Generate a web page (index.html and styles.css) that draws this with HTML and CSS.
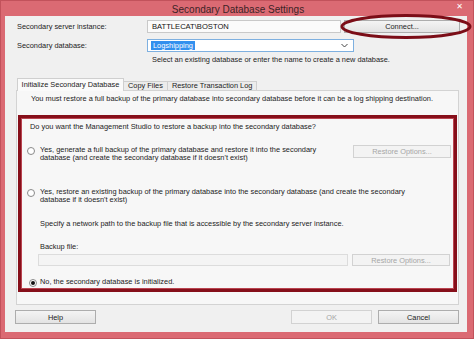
FILE: index.html
```html
<!DOCTYPE html>
<html lang="en">
<head>
  <meta charset="UTF-8" />
  <title>Secondary Database Settings</title>
  <link rel="stylesheet" href="styles.css">
</head>
<body>
  <div class="window">
    <div class="titlebar">
      <span class="title">Secondary Database Settings</span>
      <span class="close">&#x2715;</span>
    </div>

    <div class="client">
      <div class="form">
        <label class="label">Secondary server instance:</label>
        <div class="server-row">
          <div class="textbox readonly">BATTLECAT\BOSTON</div>
          <button class="btn connect">Connect...</button>
        </div>

        <label class="label">Secondary database:</label>
        <div class="combo">
          <span class="selected">Logshipping</span>
          <svg class="chevron" width="7" height="5" viewBox="0 0 7 5"><polyline points="0.5,1 3.5,4 6.5,1" fill="none" stroke="#444" stroke-width="1"/></svg>
        </div>

        <span></span>
        <div class="hint">Select an existing database or enter the name to create a new database.</div>
      </div>

      <div class="tabs">
        <div class="tab active">Initialize Secondary Database</div>
        <div class="tab">Copy Files</div>
        <div class="tab">Restore Transaction Log</div>
      </div>

      <div class="panel">
        <div class="intro">You must restore a full backup of the primary database into secondary database before it can be a log shipping destination.</div>

        <div class="group">
          <div class="question">Do you want the Management Studio to restore a backup into the secondary database?</div>

          <div class="option opt-1">
            <span class="radio"></span>
            <span class="option-text">Yes, generate a full backup of the primary database and restore it into the secondary<br>database (and create the secondary database if it doesn't exist)</span>
            <button class="btn disabled restore">Restore Options...</button>
          </div>

          <div class="option opt-2">
            <span class="radio"></span>
            <span class="option-text">Yes, restore an existing backup of the primary database into the secondary database (and create the secondary<br>database if it doesn't exist)</span>
          </div>

          <div class="indent specify">Specify a network path to the backup file that is accessible by the secondary server instance.</div>
          <div class="indent backup-label">Backup file:</div>
          <div class="backup-row">
            <div class="textbox disabled-box"></div>
            <button class="btn disabled restore">Restore Options...</button>
          </div>

          <div class="option opt-3">
            <span class="radio checked"></span>
            <span class="option-text">No, the secondary database is initialized.</span>
          </div>
        </div>
      </div>

      <div class="buttons">
        <button class="btn help">Help</button>
        <span class="spacer"></span>
        <button class="btn disabled">OK</button>
        <button class="btn">Cancel</button>
      </div>
    </div>

    <!-- annotation drawn over the screenshot -->
    <svg class="ellipse" width="134" height="26" viewBox="0 0 134 26">
      <ellipse cx="66" cy="12.5" rx="64" ry="11" fill="none" stroke="#7b0d17" stroke-width="3"/>
    </svg>
  </div>
</body>
</html>
```

FILE: styles.css
```css
* {
  margin: 0;
  padding: 0;
  box-sizing: border-box;
}

body {
  width: 474px;
  height: 339px;
  overflow: hidden;
  font-family: "Liberation Sans", Arial, sans-serif;
  font-size: 7.4px;
  color: #222;
}

.window {
  position: relative;
  width: 474px;
  height: 339px;
  background: #db6a73;
  border: 1px solid #c2525b;
  display: flex;
  flex-direction: column;
}

.titlebar {
  height: 15px;
  display: flex;
  align-items: center;
  justify-content: center;
  position: relative;
}

.title {
  font-size: 10px;
  color: #3b2326;
  margin-left: 2px;
  margin-top: 1px;
}

.close {
  position: absolute;
  right: 10px;
  top: 1px;
  color: #fff;
  font-size: 8px;
  font-family: "DejaVu Sans", sans-serif;
}

.client {
  flex: 1;
  margin: 0 6px 6px 4px;
  background: #f0f0f0;
  padding: 4px 8px 0 11px;
  display: flex;
  flex-direction: column;
}

/* top form */
.form {
  display: grid;
  grid-template-columns: 131px 1fr;
  row-gap: 6px;
  align-items: center;
}

.label {
  padding-left: 1px;
}

.server-row {
  display: flex;
  gap: 3px;
}

.textbox {
  height: 13px;
  background: #fbfbfb;
  border: 1px solid #c9c9c9;
  display: flex;
  align-items: center;
  padding-left: 4px;
}

.readonly {
  width: 194px;
  font-size: 7.6px;
  color: #111;
}

.btn {
  height: 13px;
  width: 81px;
  font-family: inherit;
  font-size: 7.4px;
  color: #222;
  background: linear-gradient(#f4f4f4, #e3e3e3);
  border: 1px solid #adadad;
}

.connect {
  width: 116px;
}

.combo {
  width: 207px;
  height: 13px;
  background: #fff;
  border: 1px solid #7eb0e0;
  display: flex;
  align-items: center;
  justify-content: space-between;
  padding: 0 5px 0 3px;
}

.selected {
  background: #3390ee;
  color: #fff;
  padding: 1px 2px;
  line-height: 7px;
}

.hint {
  margin-top: -3px;
  padding-left: 5px;
  line-height: 10px;
}

/* tabs */
.tabs {
  display: flex;
  align-items: flex-end;
  height: 12px;
  margin-top: 13px;
  padding-left: 1px;
}

.tab {
  height: 9px;
  line-height: 8px;
  padding: 0 4px;
  white-space: nowrap;
  border: 1px solid #cfcfcf;
  border-bottom: none;
  background: #ececec;
  margin-left: -1px;
}

.tab:first-child {
  margin-left: 0;
}

.tab.active {
  width: 107px;
  height: 13px;
  line-height: 11px;
  padding: 0;
  text-align: center;
  background: #fafafa;
  position: relative;
  z-index: 1;
  margin-bottom: -1px;
}

.panel {
  height: 215px;
  background: #f7f7f7;
  border: 1px solid #d3d3d3;
  padding: 0 1px;
}

.intro {
  line-height: 10px;
  margin-top: 3px;
  padding-left: 13px;
}

.group {
  margin-top: 11px;
  height: 177px;
  border: 3px solid #860f1a;
  box-shadow: inset 0 0 0 1px #b94450;
}

.question {
  margin-top: 4px;
  padding-left: 9px;
  line-height: 10px;
}

.option {
  display: flex;
  align-items: flex-start;
  padding-left: 6px;
}

.option-text {
  line-height: 8px;
  margin-left: 5px;
}

.radio {
  width: 8px;
  height: 8px;
  border-radius: 50%;
  border: 1px solid #8a8a8a;
  background: #fff;
  margin-top: 1px;
  flex-shrink: 0;
  display: flex;
  align-items: center;
  justify-content: center;
}

.radio.checked::after {
  content: "";
  width: 4px;
  height: 4px;
  border-radius: 50%;
  background: #111;
}

.opt-1 {
  margin-top: 14px;
}

.opt-1 .restore {
  margin-left: auto;
  margin-right: 3px;
  margin-top: -1px;
}

.opt-2 {
  margin-top: 26px;
}

.indent {
  padding-left: 19px;
  line-height: 10px;
}

.specify {
  margin-top: 15px;
}

.backup-label {
  margin-top: 13px;
}

.btn.disabled {
  color: #a6a6a6;
  background: #f3f3f3;
  border-color: #d2d2d2;
}

.restore {
  width: 98px;
}

.backup-row {
  display: flex;
  gap: 4px;
  margin-top: 2px;
  padding-left: 17px;
}

.disabled-box {
  width: 310px;
  height: 12px;
  background: #f4f4f4;
  border-color: #dcdcdc;
}

.backup-row .restore {
  height: 12px;
}

.opt-3 {
  margin-top: 11px;
  padding-left: 8px;
  align-items: center;
}

.opt-3 .option-text {
  line-height: 10px;
  margin-left: 3px;
}

/* bottom buttons */
.buttons {
  display: flex;
  gap: 6px;
  margin-top: 5px;
  margin-left: -1px;
}

.buttons .btn {
  height: 14px;
}

.spacer {
  flex: 1;
}

.ellipse {
  position: absolute;
  left: 339px;
  top: 13px;
}
```
